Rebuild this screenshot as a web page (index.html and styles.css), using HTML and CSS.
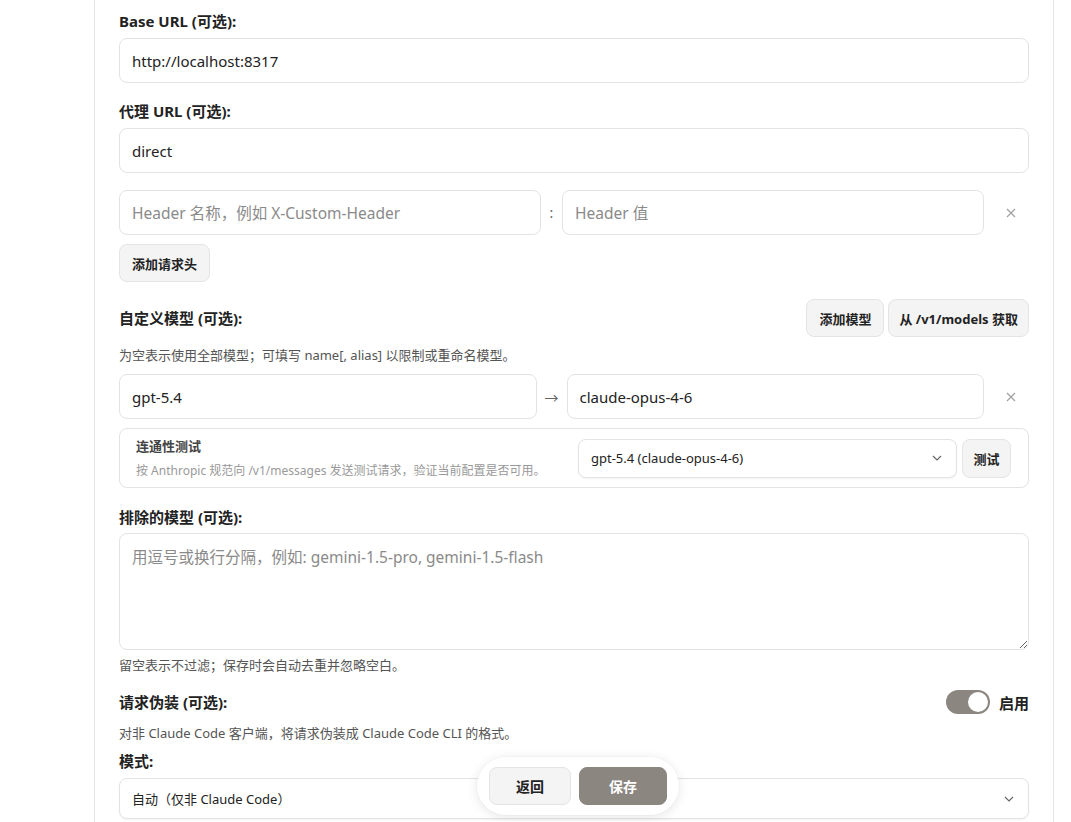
FILE: index.html
```html
<!DOCTYPE html>
<html lang="zh-CN">
<head>
<meta charset="utf-8">
<title>Provider</title>
<link rel="stylesheet" href="styles.css">
</head>
<body>
<div class="page">
  <div class="card">
    <div class="field">
      <label class="label">Base URL (可选):</label>
      <input class="input" type="text" value="http://localhost:8317">
    </div>
    <div class="field">
      <label class="label">代理 URL (可选):</label>
      <input class="input" type="text" value="direct">
    </div>

    <div class="pair-row">
      <input class="input" type="text" placeholder="Header 名称，例如 X-Custom-Header">
      <span class="sep sep-colon">:</span>
      <input class="input" type="text" placeholder="Header 值">
      <span class="remove"><svg width="10" height="10" viewBox="0 0 10 10"><path d="M1 1 L9 9 M9 1 L1 9" stroke="#a0a0a0" stroke-width="1.2" fill="none"/></svg></span>
    </div>
    <button class="btn add-header">添加请求头</button>

    <div class="section-head">
      <span class="label-inline">自定义模型 (可选):</span>
      <div class="btn-group">
        <button class="btn">添加模型</button>
        <button class="btn fetch-btn">从 /v1/models 获取</button>
      </div>
    </div>
    <p class="hint hint-models">为空表示使用全部模型；可填写 name[, alias] 以限制或重命名模型。</p>

    <div class="pair-row model-row">
      <input class="input" type="text" value="gpt-5.4">
      <span class="sep sep-arrow">→</span>
      <input class="input" type="text" value="claude-opus-4-6">
      <span class="remove"><svg width="10" height="10" viewBox="0 0 10 10"><path d="M1 1 L9 9 M9 1 L1 9" stroke="#a0a0a0" stroke-width="1.2" fill="none"/></svg></span>
    </div>

    <div class="test-box">
      <div class="test-info">
        <div class="test-title">连通性测试</div>
        <div class="test-desc">按 Anthropic 规范向 /v1/messages 发送测试请求，验证当前配置是否可用。</div>
      </div>
      <div class="select small-select">
        <span>gpt-5.4 (claude-opus-4-6)</span>
        <svg class="chev" width="10" height="6" viewBox="0 0 10 6"><polyline points="1,1 5,5 9,1" fill="none" stroke="#666" stroke-width="1.2"/></svg>
      </div>
      <button class="btn test-btn">测试</button>
    </div>

    <div class="field field-exclude">
      <label class="label">排除的模型 (可选):</label>
      <textarea class="textarea" placeholder="用逗号或换行分隔，例如: gemini-1.5-pro, gemini-1.5-flash"></textarea>
      <p class="hint hint-exclude">留空表示不过滤；保存时会自动去重并忽略空白。</p>
    </div>

    <div class="section-head disguise-head">
      <span class="label-inline">请求伪装 (可选):</span>
      <div class="toggle-wrap">
        <span class="toggle"><span class="knob"></span></span>
        <span class="toggle-text">启用</span>
      </div>
    </div>
    <p class="hint hint-disguise">对非 Claude Code 客户端，将请求伪装成 Claude Code CLI 的格式。</p>

    <label class="label mode-label">模式:</label>
    <div class="select big-select">
      <span>自动（仅非 Claude Code）</span>
      <svg class="chev" width="10" height="6" viewBox="0 0 10 6"><polyline points="1,1 5,5 9,1" fill="none" stroke="#666" stroke-width="1.2"/></svg>
    </div>
  </div>
</div>

<div class="action-bar">
  <button class="btn bar-btn back-btn">返回</button>
  <button class="btn bar-btn save-btn">保存</button>
</div>
</body>
</html>
```

FILE: styles.css
```css
* { box-sizing: border-box; }

html, body {
  margin: 0;
  background: #ffffff;
}

body {
  font-family: "Noto Sans", "Noto Sans CJK SC", sans-serif;
  color: #222222;
  overflow: hidden;
}

.page {
  padding-left: 94px;
  height: 822px;
  overflow: hidden;
}

.card {
  width: 960px;
  min-height: 900px;
  border-left: 1px solid #e6e6e6;
  border-right: 1px solid #e6e6e6;
  padding: 10px 24px 0 24px;
  background: #fff;
}

.field {
  display: flex;
  flex-direction: column;
  margin-bottom: 17px;
}

.label,
.label-inline {
  display: block;
  font-size: 15px;
  font-weight: 700;
  line-height: 22px;
  color: #222;
}

.label {
  margin-bottom: 6px;
}

.input {
  width: 100%;
  height: 45px;
  border: 1px solid #e3e3e3;
  border-radius: 8px;
  padding: 0 12px;
  font-family: inherit;
  font-size: 15px;
  color: #222;
  background: #fff;
  outline: none;
}

.input::placeholder,
.textarea::placeholder {
  color: #8a8a8a;
  opacity: 1;
  font-size: 15.5px;
}

.pair-row {
  display: flex;
  align-items: center;
}

.pair-row .input {
  flex: 1;
  min-width: 0;
}

.sep {
  text-align: center;
  color: #666;
  font-size: 14px;
}

.sep-colon { width: 21px; }
.sep-arrow { width: 30px; }

.remove {
  width: 45px;
  display: flex;
  align-items: center;
  justify-content: center;
  padding-left: 9px;
}

.btn {
  font-family: inherit;
  font-weight: 700;
  font-size: 13px;
  color: #222;
  background: #f4f4f4;
  border: 1px solid #e4e4e4;
  border-radius: 8px;
  height: 38px;
  padding: 0 12px;
  cursor: pointer;
}

.fetch-btn {
  padding: 0 10px;
}

.add-header {
  margin-top: 9px;
  display: block;
}

.section-head {
  display: flex;
  align-items: center;
  justify-content: space-between;
  margin-top: 17px;
}

.btn-group {
  display: flex;
  gap: 4px;
}

.hint {
  margin: 0;
  font-size: 13px;
  line-height: 18px;
  color: #555;
}

.hint-models {
  margin-top: 9px;
  margin-bottom: 10px;
}

.model-row {
  margin-bottom: 9px;
}

.test-box {
  display: flex;
  align-items: center;
  border: 1px solid #e3e3e3;
  border-radius: 8px;
  padding: 8px 17px 8px 16px;
  height: 60px;
}

.test-info {
  flex: 1;
  min-width: 0;
}

.test-title {
  font-size: 13px;
  font-weight: 700;
  color: #444;
  line-height: 18px;
}

.test-desc {
  font-size: 12px;
  color: #999;
  line-height: 16px;
  margin-top: 8px;
}

.select {
  display: flex;
  align-items: center;
  justify-content: space-between;
  border: 1px solid #e3e3e3;
  border-radius: 8px;
  background: #fff;
  font-size: 13px;
  color: #222;
  padding: 0 14px 0 12px;
}

.small-select {
  width: 379px;
  height: 39px;
  margin-right: 5px;
  box-shadow: 0 1px 2px rgba(0,0,0,0.05);
}

.test-btn {
  height: 39px;
  width: 49px;
  padding: 0;
}

.field-exclude {
  margin-top: 18px;
  margin-bottom: 0;
}

.field-exclude .label {
  margin-bottom: 5px;
}

.textarea {
  width: 100%;
  height: 117px;
  border: 1px solid #e3e3e3;
  border-radius: 8px;
  padding: 11px 12px;
  font-family: inherit;
  font-size: 15px;
  color: #222;
  resize: vertical;
  outline: none;
  display: block;
}

.hint-exclude {
  margin-top: 6px;
}

.disguise-head {
  margin-top: 16px;
}

.toggle-wrap {
  display: flex;
  align-items: center;
  gap: 9px;
}

.toggle {
  width: 44px;
  height: 24px;
  border-radius: 12px;
  background: #8b8680;
  display: flex;
  align-items: center;
  justify-content: flex-end;
  padding: 0 2px;
}

.knob {
  width: 20px;
  height: 20px;
  border-radius: 50%;
  background: #fff;
}

.toggle-text {
  font-size: 15px;
  font-weight: 700;
  color: #222;
}

.hint-disguise {
  margin-top: 10px;
}

.mode-label {
  margin-top: 8px;
  margin-bottom: 6px;
}

.big-select {
  width: 100%;
  height: 41px;
  box-shadow: 0 1px 2px rgba(0,0,0,0.05);
}

.chev {
  flex: none;
}

.action-bar {
  position: fixed;
  left: 477px;
  bottom: 7px;
  display: flex;
  gap: 8px;
  padding: 10px 12px;
  background: #fff;
  border-radius: 30px;
  box-shadow: 0 2px 12px rgba(0,0,0,0.10), 0 0 0 1px rgba(0,0,0,0.02);
}

.bar-btn {
  height: 38px;
  font-size: 14px;
}

.back-btn {
  width: 82px;
}

.save-btn {
  width: 88px;
  background: #8b8680;
  border-color: #8b8680;
  color: #fff;
}
```
